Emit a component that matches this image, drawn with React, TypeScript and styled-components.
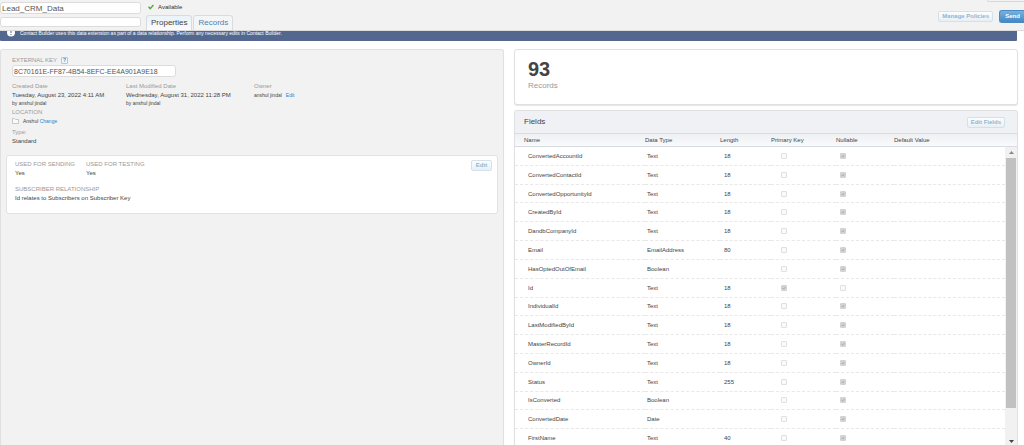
import React from "react";
import styled, { createGlobalStyle } from "styled-components";

const GlobalStyle = createGlobalStyle`
  * { box-sizing: border-box; }
  html, body, #root { height: 100%; }
  body {
    margin: 0;
    overflow: hidden;
    background: #fff;
    color: #444;
    font: 6px/10px "Liberation Sans", Arial, sans-serif;
  }
  dl, dd, h2, p { margin: 0; }
  button, input { font-family: inherit; }
`;

const Page = styled.div`
  height: 100%;
  display: flex;
  flex-direction: column;
`;

const Header = styled.header`
  flex: none;
  display: flex;
  align-items: stretch;
  height: 31px;
  border-bottom: 1px solid #dcdcdc;
  background: #f2f2f2;
`;

const NameFields = styled.div`
  display: flex;
  flex-direction: column;
  gap: 3px;
  width: 141px;
  padding-top: 2px;
`;

const TextBox = styled.input<{ $height: number; $size: number; $width?: string }>`
  width: ${(p) => p.$width ?? "100%"};
  height: ${(p) => p.$height}px;
  padding: 0 1px;
  border: 1px solid #dcdcdc;
  border-radius: 3px;
  background: #fff;
  color: #555;
  font-size: ${(p) => p.$size}px;
`;

const StatusArea = styled.div`
  flex: 1;
  display: flex;
  flex-direction: column;
  justify-content: space-between;
  padding: 2px 0 0 5px;
`;

const Status = styled.div`
  display: flex;
  align-items: center;
  gap: 4px;
  padding-left: 2px;
  color: #333;
`;

const Tabs = styled.nav`
  display: flex;
  gap: 1px;
`;

const Tab = styled.button<{ $active?: boolean }>`
  height: 15px;
  padding: 0 4px;
  border: 1px solid #d9dcde;
  border-bottom: 0;
  border-radius: 3px 3px 0 0;
  background: ${(p) => (p.$active ? "linear-gradient(#e9f3f8, #fbfbfb)" : "#f4f5f6")};
  color: ${(p) => (p.$active ? "#444" : "#4f7fb0")};
  font-size: 8px;
  line-height: 14px;
`;

const HeaderActions = styled.div`
  display: flex;
  flex-direction: column;
  align-items: flex-end;
  gap: 8px;
`;

const CornerTab = styled.div`
  width: 37px;
  height: 2px;
  border: 1px solid #d8d8d8;
  border-width: 0 0 1px 1px;
  border-radius: 0 0 0 2px;
`;

const ActionRow = styled.div`
  display: flex;
  align-items: center;
  gap: 6px;
`;

const SoftButton = styled.button`
  min-width: 21px;
  height: 11px;
  padding: 0 3px;
  border: 1px solid #d3e1ea;
  border-radius: 2px;
  background: linear-gradient(#fbfdfe, #e8f0f5);
  color: #8fb6d3;
  font-size: 6px;
  font-weight: bold;
  line-height: 9px;
  white-space: nowrap;
`;

const SendButton = styled.button`
  width: 25px;
  height: 13px;
  padding: 0 0 0 1px;
  border: 1px solid #4b8bc2;
  border-right: 0;
  border-radius: 3px 0 0 3px;
  background: linear-gradient(#73b2e2, #4488c4);
  color: #fff;
  font-size: 6px;
  font-weight: bold;
  line-height: 11px;
`;

const Banner = styled.div`
  flex: none;
  display: flex;
  align-items: flex-start;
  gap: 5px;
  height: 10px;
  margin-right: 7px;
  padding-left: 7px;
  overflow: hidden;
  border-radius: 0 0 1px 1px;
  background: #54688f;
  color: #fff;
  font-size: 5px;

  svg, p { flex: none; margin-top: -3px; }
`;

const Main = styled.main`
  flex: 1;
  min-height: 0;
  display: grid;
  grid-template-columns: 1fr 1fr;
  gap: 10px;
  padding: 8px 6px 0 0;
`;

const Panel = styled.section<{ $tint?: boolean }>`
  border: 1px solid #e0e0e0;
  border-radius: 3px;
  background: ${(p) => (p.$tint ? "#f2f2f2" : "#fff")};
  box-shadow: 0 1px 1px #e6e6e6;
`;

const OpenPanel = styled(Panel)`
  min-height: 0;
  border-bottom: 0;
  border-radius: 3px 3px 0 0;
  overflow: hidden;
`;

const Details = styled(OpenPanel)`
  padding: 6px 5px 0;
`;

const Block = styled.div<{ $top?: number }>`
  margin: ${(p) => p.$top ?? 0}px 6px 0;
`;

const LabelRow = styled.div`
  display: flex;
  align-items: center;
  gap: 4px;
  height: 8px;
  margin-bottom: 1px;
`;

const caption = `
  display: block;
  color: #999;
  font-size: 6px;
  line-height: 8px;
`;

const Caption = styled.dt`${caption}`;
const InputLabel = styled.label`${caption}`;

const HelpButton = styled.button`
  width: 7px;
  height: 7px;
  padding: 0;
  border: 1px solid #a9cbe2;
  border-radius: 1px;
  background: #eef7fc;
  color: #3d84b8;
  font-size: 5px;
  font-weight: bold;
  line-height: 5px;
`;

const KeyBox = styled(TextBox)`
  display: block;
`;

const Facts = styled.dl<{ $columns?: string }>`
  display: grid;
  grid-template-columns: ${(p) => p.$columns ?? "1fr"};
  row-gap: 2px;
`;

const Small = styled.small`
  display: block;
  font-size: 5px;
  line-height: 7px;
`;

const Minor = styled.dd`
  display: flex;
  align-items: center;
  gap: 4px;
  font-size: 5px;
`;

const Link = styled.a`
  color: #2a83c8;
  text-decoration: none;
`;

const Sending = styled.div`
  display: flex;
  align-items: flex-start;
  justify-content: space-between;
  height: 59px;
  margin-top: 9px;
  padding: 4px 5px 0 8px;
  border: 1px solid #e2e2e2;
  border-radius: 3px;
  background: #fff;
`;

const SendingFacts = styled.div`
  display: grid;
  gap: 7px;
`;

const Side = styled.div`
  min-width: 0;
  min-height: 0;
  display: flex;
  flex-direction: column;
  gap: 5px;
`;

const CountCard = styled(Panel)`
  flex: none;
  height: 56px;
  padding: 8px 13px;
`;

const Count = styled.p`
  font-size: 20px;
  font-weight: bold;
  line-height: 22px;
`;

const CountLabel = styled.p`
  color: #999;
  font-size: 8px;
  line-height: 12px;
`;

const FieldsPanel = styled(OpenPanel)`
  flex: 1;
  display: flex;
  flex-direction: column;
`;

const FieldsBar = styled.div`
  flex: none;
  display: flex;
  align-items: center;
  justify-content: space-between;
  height: 22px;
  padding: 0 12px 0 9px;
  background: #eff1f4;
`;

const FieldsTitle = styled.h2`
  font-size: 8px;
  font-weight: normal;
`;

const TableArea = styled.div`
  flex: 1;
  min-height: 0;
  display: flex;
  overflow: hidden;
`;

const headFill = `
  height: 14px;
  border-top: 1px solid #d9dce0;
  border-bottom: 1px solid #d9dce0;
  background: linear-gradient(#eef0f3, #f9fafb);
`;

const Table = styled.table`
  flex: 1;
  height: 315px;
  table-layout: fixed;
  border-spacing: 0;
  border-collapse: separate;

  th, td {
    padding: 0;
    text-align: left;
    font-weight: normal;
    white-space: nowrap;
  }
  th { ${headFill} font-size: 6px; }
  th:first-child { padding-left: 9px; }
  td {
    border-bottom: 1px dashed #e8e8e8;
    font-size: 6px;
    line-height: 8px;
  }
`;

const Col = styled.col<{ $width?: number }>`
  width: ${(p) => (p.$width ? `${p.$width}px` : "auto")};
`;

const Cell = styled.td<{ $indent: number }>`
  && { padding-left: ${(p) => p.$indent}px; }
`;

const Tick = styled.input`
  appearance: none;
  display: block;
  width: 6px;
  height: 6px;
  margin: 0;
  border: 1px solid #e0e0e0;
  border-radius: 1px;
  background: #fafafa;

  &:checked {
    border-color: #d2d2d2;
    background: #d2d2d2 url("data:image/svg+xml,%3Csvg xmlns='http://www.w3.org/2000/svg' viewBox='0 0 6 6'%3E%3Cpath d='M1 3l1.5 1.5L5 1.5' fill='none' stroke='%23999' /%3E%3C/svg%3E") center / 4px 4px no-repeat;
  }
`;

const ScrollColumn = styled.div`
  flex: none;
  width: 12px;
  display: flex;
  flex-direction: column;
`;

const ScrollHead = styled.div`
  ${headFill}
  flex: none;
`;

const Track = styled.div`
  flex: 1;
  display: flex;
  flex-direction: column;
  align-items: center;
  padding: 0 1px;
  background: #f1f1f1;
`;

const Arrow = styled.div<{ $down?: boolean }>`
  flex: none;
  display: flex;
  align-items: ${(p) => (p.$down ? "flex-end" : "center")};
  height: 11px;
  margin-top: ${(p) => (p.$down ? "auto" : "0")};
  padding-bottom: ${(p) => (p.$down ? 2 : 0)}px;
`;

const Thumb = styled.div`
  width: 100%;
  height: 84%;
  background: #c1c1c1;
`;

type Field = { name: string; type: string; length?: number; key?: boolean; required?: boolean };

const fields: Field[] = [
  { name: "ConvertedAccountId", type: "Text", length: 18 },
  { name: "ConvertedContactId", type: "Text", length: 18 },
  { name: "ConvertedOpportunityId", type: "Text", length: 18 },
  { name: "CreatedById", type: "Text", length: 18 },
  { name: "DandbCompanyId", type: "Text", length: 18 },
  { name: "Email", type: "EmailAddress", length: 80 },
  { name: "HasOptedOutOfEmail", type: "Boolean" },
  { name: "Id", type: "Text", length: 18, key: true, required: true },
  { name: "IndividualId", type: "Text", length: 18 },
  { name: "LastModifiedById", type: "Text", length: 18 },
  { name: "MasterRecordId", type: "Text", length: 18 },
  { name: "OwnerId", type: "Text", length: 18 },
  { name: "Status", type: "Text", length: 255 },
  { name: "IsConverted", type: "Boolean" },
  { name: "ConvertedDate", type: "Date" },
  { name: "FirstName", type: "Text", length: 40 },
];

export default function App() {
  return (
    <Page>
      <GlobalStyle />
      <Header>
        <NameFields>
          <TextBox aria-label="Name" defaultValue="Lead_CRM_Data" $height={12} $size={8} />
          <TextBox aria-label="Description" $height={10} $size={7} />
        </NameFields>
        <StatusArea>
          <Status>
            <svg width="6" height="6" viewBox="0 0 6 6" aria-hidden="true">
              <path d="M.5 2.8 2.2 4.6 5.4 1" fill="none" stroke="#4fae33" strokeWidth="1.4" />
            </svg>
            Available
          </Status>
          <Tabs>
            <Tab type="button" $active>Properties</Tab>
            <Tab type="button">Records</Tab>
          </Tabs>
        </StatusArea>
        <HeaderActions>
          <CornerTab />
          <ActionRow>
            <SoftButton type="button">Manage Policies</SoftButton>
            <SendButton type="button">Send</SendButton>
          </ActionRow>
        </HeaderActions>
      </Header>

      <Banner role="status">
        <svg width="8" height="9" viewBox="0 0 8 9" aria-hidden="true">
          <circle cx="4" cy="4.5" r="4" fill="#fff" />
          <path d="M4 2v3M4 6v1" stroke="#54688f" />
        </svg>
        <p>
          Contact Builder uses this data extension as part of a data relationship. Perform any
          necessary edits in Contact Builder.
        </p>
      </Banner>

      <Main>
        <Details $tint>
          <Block>
            <LabelRow>
              <InputLabel htmlFor="external-key">EXTERNAL KEY</InputLabel>
              <HelpButton type="button">?</HelpButton>
            </LabelRow>
            <KeyBox
              id="external-key"
              defaultValue="8C70161E-FF87-4B54-8EFC-EE4A901A9E18"
              $height={12}
              $size={7}
              $width="164px"
            />
          </Block>
          <Block $top={5}>
            <Facts $columns="114px 128px 1fr">
              <div>
                <Caption>Created Date</Caption>
                <dd>Tuesday, August 23, 2022 4:11 AM<Small>by anshul jindal</Small></dd>
              </div>
              <div>
                <Caption>Last Modified Date</Caption>
                <dd>Wednesday, August 31, 2022 11:28 PM<Small>by anshul jindal</Small></dd>
              </div>
              <div>
                <Caption>Owner</Caption>
                <Minor>anshul jindal <Link href="#owner">Edit</Link></Minor>
              </div>
            </Facts>
          </Block>
          <Block $top={1}>
            <Facts>
              <div>
                <Caption>LOCATION</Caption>
                <Minor>
                  <svg width="7" height="6" viewBox="0 0 7 6" aria-hidden="true">
                    <path d="M.5 5.5v-5h2l1 1h3v4z" fill="#fafafa" stroke="#b5b5b5" strokeWidth=".7" />
                  </svg>
                  <span>Anshul <Link href="#location">Change</Link></span>
                </Minor>
              </div>
              <div>
                <Caption>Type:</Caption>
                <dd>Standard</dd>
              </div>
            </Facts>
          </Block>
          <Sending>
            <SendingFacts>
              <Facts $columns="71px 71px">
                <div>
                  <Caption>USED FOR SENDING</Caption>
                  <dd>Yes</dd>
                </div>
                <div>
                  <Caption>USED FOR TESTING</Caption>
                  <dd>Yes</dd>
                </div>
              </Facts>
              <Facts>
                <div>
                  <Caption>SUBSCRIBER RELATIONSHIP</Caption>
                  <dd>Id relates to Subscribers on Subscriber Key</dd>
                </div>
              </Facts>
            </SendingFacts>
            <SoftButton type="button">Edit</SoftButton>
          </Sending>
        </Details>

        <Side>
          <CountCard>
            <Count>93</Count>
            <CountLabel>Records</CountLabel>
          </CountCard>
          <FieldsPanel>
            <FieldsBar>
              <FieldsTitle>Fields</FieldsTitle>
              <SoftButton type="button">Edit Fields</SoftButton>
            </FieldsBar>
            <TableArea>
              <Table>
                <colgroup>
                  <Col $width={130} />
                  <Col $width={75} />
                  <Col $width={51} />
                  <Col $width={65} />
                  <Col $width={58} />
                  <Col />
                </colgroup>
                <thead>
                  <tr>
                    <th>Name</th>
                    <th>Data Type</th>
                    <th>Length</th>
                    <th>Primary Key</th>
                    <th>Nullable</th>
                    <th>Default Value</th>
                  </tr>
                </thead>
                <tbody>
                  {fields.map((f) => (
                    <tr key={f.name}>
                      <Cell $indent={13}>{f.name}</Cell>
                      <Cell $indent={2}>{f.type}</Cell>
                      <Cell $indent={4}>{f.length}</Cell>
                      <Cell $indent={10}>
                        <Tick type="checkbox" aria-label={`${f.name} primary key`} defaultChecked={f.key} disabled />
                      </Cell>
                      <Cell $indent={4}>
                        <Tick type="checkbox" aria-label={`${f.name} nullable`} defaultChecked={!f.required} disabled />
                      </Cell>
                      <td />
                    </tr>
                  ))}
                </tbody>
              </Table>
              <ScrollColumn aria-hidden="true">
                <ScrollHead />
                <Track>
                  <Arrow>
                    <svg width="5" height="3" viewBox="0 0 5 3"><path d="M0 3h5L2.5 0z" fill="#8a8a8a" /></svg>
                  </Arrow>
                  <Thumb />
                  <Arrow $down>
                    <svg width="5" height="3" viewBox="0 0 5 3"><path d="M0 0h5L2.5 3z" fill="#444" /></svg>
                  </Arrow>
                </Track>
              </ScrollColumn>
            </TableArea>
          </FieldsPanel>
        </Side>
      </Main>
    </Page>
  );
}
